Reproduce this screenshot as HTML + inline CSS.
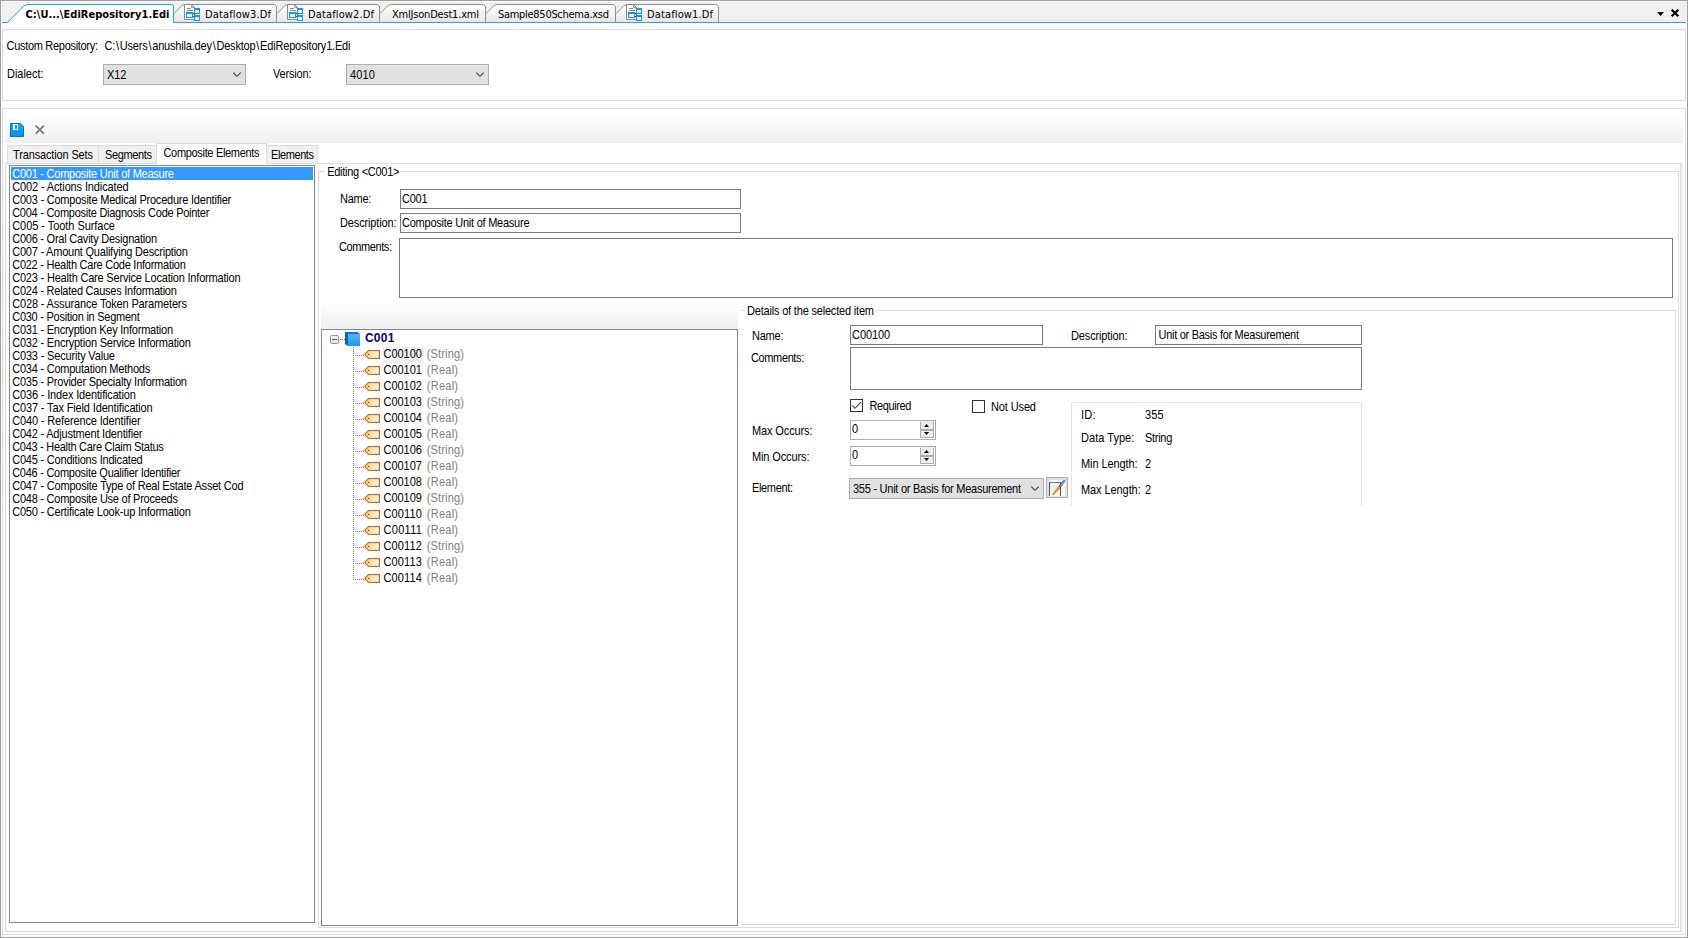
<!DOCTYPE html>
<html lang="en"><head><meta charset="utf-8"><title>EdiRepository1.Edi</title>
<style>
*{box-sizing:border-box;margin:0;padding:0}
html,body{width:1688px;height:938px;overflow:hidden;background:#fff}
body{position:relative;font-family:"Liberation Sans",sans-serif;font-size:11px;color:#000;letter-spacing:-0.27px}
.a{position:absolute}
.t{position:absolute;white-space:pre;line-height:13px;height:13px;transform:scaleY(1.125);transform-origin:0 10px}
.th{font-family:"DejaVu Sans Condensed","DejaVu Sans",sans-serif;font-size:11px;letter-spacing:0;transform:none}
.box{position:absolute;border:1px solid #dcdcdc}
.inp{position:absolute;border:1px solid #7a7a7a;background:#fff}
.cmb{position:absolute;border:1px solid #adadad;background:#e1e1e1}
.grad{position:absolute;background:linear-gradient(#fcfcfc,#f0f0f0)}
.li{position:absolute;left:1px;width:302px;height:13px;line-height:12px;white-space:pre;padding:1px 0 0 1.2px}
.li span{display:inline-block;transform:scaleY(1.125);transform-origin:0 10px}
.tr{position:absolute;white-space:pre;font-size:11px;line-height:16px;height:16px;transform:scaleY(1.125);transform-origin:0 12px}
.trb{position:absolute;white-space:pre;font-size:12px;line-height:16px;height:16px;font-weight:bold;color:#000080}
.tr i{font-style:normal;color:#808080;position:absolute;left:43.3px;top:0}
svg{position:absolute;overflow:visible}
</style></head>
<body>
<div class="a" style="left:0;top:0;width:1688px;height:938px;border:1px solid #a0a0a0"></div>
<div class="a" style="left:2px;top:2px;width:1685px;height:20px;background:#f0f0f0"></div>
<div class="a" style="left:1px;top:1px;width:1686px;height:1px;background:#fbfbfb"></div>
<div class="a" style="left:2px;top:22px;width:1684px;height:1px;background:#3399ff"></div>
<svg class="a" style="left:0;top:0" width="1688" height="30" viewBox="0 0 1688 30">
<defs><linearGradient id="tg" x1="0" y1="0" x2="0" y2="1"><stop offset="0" stop-color="#ffffff"/><stop offset="1" stop-color="#e6e6e6"/></linearGradient></defs>
<path d="M174 22V13.5L182 5.5L185 4.5H274.5L276.5 6.5V22Z" fill="url(#tg)"/>
<path d="M173.5 14L182 5.5L185 4.5H274.5L276.5 6.5V22" fill="none" stroke="#919191"/>
<g transform="translate(184,4)">
<path d="M0.5 0.5H7.5L10.5 3.5V15.5H0.5Z" fill="#fff" stroke="#8a8a8a"/>
<path d="M7.5 0.5V3.5H10.5" fill="none" stroke="#9a9a9a"/>
<path d="M3 4.5H7M3 6.5H9" stroke="#8c8c8c"/>
<g shape-rendering="crispEdges" fill="#3a3a3a"><rect x="9" y="9" width="1" height="1"/><rect x="9" y="12" width="1" height="1"/><rect x="10" y="10" width="1" height="1"/></g>
<g shape-rendering="crispEdges"><rect x="2" y="8" width="7" height="6" fill="#0c9bf4"/><rect x="3" y="10" width="5" height="3" fill="#fff"/>
<rect x="10" y="4" width="6" height="6" fill="#0c9bf4"/><rect x="11" y="6" width="4" height="3" fill="#fff"/>
<rect x="10" y="11" width="6" height="6" fill="#0c9bf4"/><rect x="11" y="13" width="4" height="3" fill="#fff"/></g>
</g>
<path d="M277 22V13.5L285 5.5L288 4.5H377.5L379.5 6.5V22Z" fill="url(#tg)"/>
<path d="M276.5 14L285 5.5L288 4.5H377.5L379.5 6.5V22" fill="none" stroke="#919191"/>
<g transform="translate(287,4)">
<path d="M0.5 0.5H7.5L10.5 3.5V15.5H0.5Z" fill="#fff" stroke="#8a8a8a"/>
<path d="M7.5 0.5V3.5H10.5" fill="none" stroke="#9a9a9a"/>
<path d="M3 4.5H7M3 6.5H9" stroke="#8c8c8c"/>
<g shape-rendering="crispEdges" fill="#3a3a3a"><rect x="9" y="9" width="1" height="1"/><rect x="9" y="12" width="1" height="1"/><rect x="10" y="10" width="1" height="1"/></g>
<g shape-rendering="crispEdges"><rect x="2" y="8" width="7" height="6" fill="#0c9bf4"/><rect x="3" y="10" width="5" height="3" fill="#fff"/>
<rect x="10" y="4" width="6" height="6" fill="#0c9bf4"/><rect x="11" y="6" width="4" height="3" fill="#fff"/>
<rect x="10" y="11" width="6" height="6" fill="#0c9bf4"/><rect x="11" y="13" width="4" height="3" fill="#fff"/></g>
</g>
<path d="M380 22V13.5L388 5.5L391 4.5H483.5L485.5 6.5V22Z" fill="url(#tg)"/>
<path d="M379.5 14L388 5.5L391 4.5H483.5L485.5 6.5V22" fill="none" stroke="#919191"/>
<path d="M486 22V13.5L494 5.5L497 4.5H613.5L615.5 6.5V22Z" fill="url(#tg)"/>
<path d="M485.5 14L494 5.5L497 4.5H613.5L615.5 6.5V22" fill="none" stroke="#919191"/>
<path d="M616 22V13.5L624 5.5L627 4.5H716.5L718.5 6.5V22Z" fill="url(#tg)"/>
<path d="M615.5 14L624 5.5L627 4.5H716.5L718.5 6.5V22" fill="none" stroke="#919191"/>
<g transform="translate(626,4)">
<path d="M0.5 0.5H7.5L10.5 3.5V15.5H0.5Z" fill="#fff" stroke="#8a8a8a"/>
<path d="M7.5 0.5V3.5H10.5" fill="none" stroke="#9a9a9a"/>
<path d="M3 4.5H7M3 6.5H9" stroke="#8c8c8c"/>
<g shape-rendering="crispEdges" fill="#3a3a3a"><rect x="9" y="9" width="1" height="1"/><rect x="9" y="12" width="1" height="1"/><rect x="10" y="10" width="1" height="1"/></g>
<g shape-rendering="crispEdges"><rect x="2" y="8" width="7" height="6" fill="#0c9bf4"/><rect x="3" y="10" width="5" height="3" fill="#fff"/>
<rect x="10" y="4" width="6" height="6" fill="#0c9bf4"/><rect x="11" y="6" width="4" height="3" fill="#fff"/>
<rect x="10" y="11" width="6" height="6" fill="#0c9bf4"/><rect x="11" y="13" width="4" height="3" fill="#fff"/></g>
</g>
<path d="M7.5 23L23.5 6.5L27 5H171L173 7V23Z" fill="#fff"/>
<path d="M2 22.5H7.5L23.3 6.3L27 4.5H171.5Q173.5 4.5 173.5 6.5V22.5H1686" fill="none" stroke="#3399ff"/>
<path d="M1657 12H1664L1660.5 16Z" fill="#000"/>
<path d="M1671.7 9.7L1678.3 16.3M1678.3 9.7L1671.7 16.3" stroke="#000" stroke-width="2.2" fill="none"/>
</svg>
<div class="t th" style="left:25.5px;top:8px;font-weight:bold;letter-spacing:0.03px;">C:\U...\EdiRepository1.Edi</div>
<div class="t th" style="left:205px;top:8px;letter-spacing:0.131px;">Dataflow3.Df</div>
<div class="t th" style="left:308px;top:8px;letter-spacing:0.131px;">Dataflow2.Df</div>
<div class="t th" style="left:392px;top:8px;letter-spacing:-0.2px;">XmlJsonDest1.xml</div>
<div class="t th" style="left:498px;top:8px;letter-spacing:-0.291px;">Sample850Schema.xsd</div>
<div class="t th" style="left:647px;top:8px;letter-spacing:0.131px;">Dataflow1.Df</div>
<div class="box" style="left:2px;top:29px;width:1684px;height:72px"></div>
<div class="t " style="left:6.5px;top:40px;letter-spacing:-0.3px;">Custom Repository:</div>
<div class="t " style="left:104.5px;top:40px;letter-spacing:-0.188px;">C:<span style="margin:0 0.9px">\</span>Users<span style="margin:0 0.9px">\</span>anushila.dey<span style="margin:0 0.9px">\</span>Desktop<span style="margin:0 0.9px">\</span>EdiRepository1.Edi</div>
<div class="t " style="left:7px;top:68px;letter-spacing:-0.027px;">Dialect:</div>
<div class="t " style="left:273px;top:68px;letter-spacing:-0.179px;">Version:</div>
<div class="cmb" style="left:103px;top:64px;width:143px;height:21px"><div class="t" style="left:3px;top:4px;letter-spacing:-0.139px;">X12</div><svg width="8" height="5" viewBox="0 0 8 5" style="right:4px;top:7px"><path d="M0.3 0.6L4 4.3L7.7 0.6" fill="none" stroke="#3a3a3a" stroke-width="1.05"/></svg></div>
<div class="cmb" style="left:346px;top:64px;width:143px;height:21px"><div class="t" style="left:3px;top:4px;letter-spacing:0.172px;">4010</div><svg width="8" height="5" viewBox="0 0 8 5" style="right:4px;top:7px"><path d="M0.3 0.6L4 4.3L7.7 0.6" fill="none" stroke="#3a3a3a" stroke-width="1.05"/></svg></div>
<div class="box" style="left:2px;top:108px;width:1684px;height:827px"></div>
<div class="grad" style="left:5px;top:118px;width:1678px;height:25px"></div>
<svg style="left:10px;top:123px" width="14" height="14" viewBox="0 0 14 14">
<defs><linearGradient id="sg" x1="0" y1="0" x2="0" y2="1"><stop offset="0" stop-color="#1aa6fb"/><stop offset="1" stop-color="#0894ec"/></linearGradient></defs>
<path d="M0.5 0.5H10.5L13.5 3.5V13.5H0.5Z" fill="url(#sg)" stroke="#0273c4"/>
<rect x="3" y="1" width="5" height="6" fill="#fff"/><rect x="5" y="2" width="2" height="4" fill="#0c9bf4"/></svg>
<svg style="left:35px;top:125px" width="10" height="10" viewBox="0 0 10 10"><path d="M0.7 0.7L8.8 8.8M8.8 0.7L0.7 8.8" stroke="#7c7c7c" stroke-width="1.8" fill="none"/></svg>
<div class="a" style="left:1681px;top:163px;width:2px;height:770px;background:#f0f0f0"></div>
<div class="box" style="left:5px;top:163px;width:1676px;height:769px"></div>
<div class="a" style="left:7px;top:145px;width:92px;height:18px;background:#f0f0f0;border:1px solid #dcdcdc;border-bottom:none"></div>
<div class="t " style="left:13px;top:149px;letter-spacing:-0.143px;">Transaction Sets</div>
<div class="a" style="left:98px;top:145px;width:59px;height:18px;background:#f0f0f0;border:1px solid #dcdcdc;border-bottom:none"></div>
<div class="t " style="left:105px;top:149px;letter-spacing:-0.362px;">Segments</div>
<div class="a" style="left:266px;top:145px;width:52px;height:18px;background:#f0f0f0;border:1px solid #dcdcdc;border-bottom:none"></div>
<div class="t " style="left:271px;top:149px;letter-spacing:-0.408px;">Elements</div>
<div class="a" style="left:156px;top:143px;width:111px;height:21px;background:#fff;border:1px solid #dcdcdc;border-bottom:none"></div>
<div class="t " style="left:163.5px;top:147px;letter-spacing:-0.324px;">Composite Elements</div>
<div class="a" style="left:9px;top:165px;width:306px;height:758px;border:1px solid #828790;background:#fff">
<div class="li" style="top:1px;background:#3399ff;color:#fff;letter-spacing:-0.244px"><span>C001 - Composite Unit of Measure</span></div>
<div class="li" style="top:14px;letter-spacing:-0.124px"><span>C002 - Actions Indicated</span></div>
<div class="li" style="top:27px;letter-spacing:-0.218px"><span>C003 - Composite Medical Procedure Identifier</span></div>
<div class="li" style="top:40px;letter-spacing:-0.265px"><span>C004 - Composite Diagnosis Code Pointer</span></div>
<div class="li" style="top:53px;letter-spacing:-0.05px"><span>C005 - Tooth Surface</span></div>
<div class="li" style="top:66px;letter-spacing:-0.235px"><span>C006 - Oral Cavity Designation</span></div>
<div class="li" style="top:79px;letter-spacing:-0.221px"><span>C007 - Amount Qualifying Description</span></div>
<div class="li" style="top:92px;letter-spacing:-0.251px"><span>C022 - Health Care Code Information</span></div>
<div class="li" style="top:105px;letter-spacing:-0.192px"><span>C023 - Health Care Service Location Information</span></div>
<div class="li" style="top:118px;letter-spacing:-0.242px"><span>C024 - Related Causes Information</span></div>
<div class="li" style="top:131px;letter-spacing:-0.152px"><span>C028 - Assurance Token Parameters</span></div>
<div class="li" style="top:144px;letter-spacing:-0.253px"><span>C030 - Position in Segment</span></div>
<div class="li" style="top:157px;letter-spacing:-0.229px"><span>C031 - Encryption Key Information</span></div>
<div class="li" style="top:170px;letter-spacing:-0.202px"><span>C032 - Encryption Service Information</span></div>
<div class="li" style="top:183px;letter-spacing:-0.169px"><span>C033 - Security Value</span></div>
<div class="li" style="top:196px;letter-spacing:-0.228px"><span>C034 - Computation Methods</span></div>
<div class="li" style="top:209px;letter-spacing:-0.225px"><span>C035 - Provider Specialty Information</span></div>
<div class="li" style="top:222px;letter-spacing:-0.158px"><span>C036 - Index Identification</span></div>
<div class="li" style="top:235px;letter-spacing:-0.141px"><span>C037 - Tax Field Identification</span></div>
<div class="li" style="top:248px;letter-spacing:-0.141px"><span>C040 - Reference Identifier</span></div>
<div class="li" style="top:261px;letter-spacing:-0.202px"><span>C042 - Adjustment Identifier</span></div>
<div class="li" style="top:274px;letter-spacing:-0.286px"><span>C043 - Health Care Claim Status</span></div>
<div class="li" style="top:287px;letter-spacing:-0.202px"><span>C045 - Conditions Indicated</span></div>
<div class="li" style="top:300px;letter-spacing:-0.267px"><span>C046 - Composite Qualifier Identifier</span></div>
<div class="li" style="top:313px;letter-spacing:-0.207px"><span>C047 - Composite Type of Real Estate Asset Cod</span></div>
<div class="li" style="top:326px;letter-spacing:-0.236px"><span>C048 - Composite Use of Proceeds</span></div>
<div class="li" style="top:339px;letter-spacing:-0.213px"><span>C050 - Certificate Look-up Information</span></div>
</div>
<div class="box" style="left:318px;top:171px;width:1361px;height:757px"></div>
<div class="a" style="left:325px;top:171px;width:76px;height:1px;background:#fff"></div>
<div class="t " style="left:327.2px;top:166px;letter-spacing:-0.273px;">Editing &lt;C001&gt;</div>
<div class="t " style="left:340px;top:193px;letter-spacing:-0.252px;">Name:</div>
<div class="t " style="left:340px;top:217px;letter-spacing:-0.143px;">Description:</div>
<div class="t " style="left:339.0px;top:241px;letter-spacing:-0.406px;">Comments:</div>
<div class="inp" style="left:400px;top:189px;width:341px;height:20px"><div class="t" style="left:1.0px;top:3px;letter-spacing:-0.266px;">C001</div></div>
<div class="inp" style="left:400px;top:213px;width:341px;height:20px"><div class="t" style="left:1.0px;top:3px;letter-spacing:-0.241px;">Composite Unit of Measure</div></div>
<div class="inp" style="left:399px;top:238px;width:1274px;height:60px"></div>
<div class="grad" style="left:321px;top:304px;width:417px;height:25px"></div>
<div class="a" style="left:321px;top:329px;width:417px;height:597px;border:1px solid #828790;background:#fff"></div>
<svg style="left:330px;top:335px" width="9" height="9" viewBox="0 0 9 9">
<defs><linearGradient id="eg" x1="0" y1="0" x2="1" y2="1"><stop offset="0" stop-color="#fff"/><stop offset="1" stop-color="#d8d8d8"/></linearGradient></defs>
<rect x="0.5" y="0.5" width="8" height="8" rx="1.2" fill="url(#eg)" stroke="#919191"/><path d="M2 4.5H7" stroke="#3f58a8" stroke-width="1"/></svg>
<svg style="left:0;top:0" width="1688" height="938" viewBox="0 0 1688 938" class="a"><g stroke="#7f7f7f" stroke-width="1" stroke-dasharray="1 1" fill="none" shape-rendering="crispEdges"><path d="M340 339.5H345"/><path d="M353.5 347V580"/><path d="M355 355.5H364"/><path d="M355 371.5H364"/><path d="M355 387.5H364"/><path d="M355 403.5H364"/><path d="M355 419.5H364"/><path d="M355 435.5H364"/><path d="M355 451.5H364"/><path d="M355 467.5H364"/><path d="M355 483.5H364"/><path d="M355 499.5H364"/><path d="M355 515.5H364"/><path d="M355 531.5H364"/><path d="M355 547.5H364"/><path d="M355 563.5H364"/><path d="M355 579.5H364"/></g></svg>
<svg style="left:345px;top:332px" width="15" height="14" viewBox="0 0 15 14">
<defs><linearGradient id="cg" x1="0" y1="0" x2="0" y2="1"><stop offset="0" stop-color="#52b5f8"/><stop offset="1" stop-color="#1b9bf0"/></linearGradient></defs>
<path d="M0 0H12L15 2V14H3L0 12Z" fill="#0b62a8"/>
<path d="M0 0H12L15 2H3Z" fill="#1279c8"/>
<rect x="3" y="2" width="12" height="12" fill="url(#cg)"/></svg>
<div class="trb" style="left:365px;top:330px;letter-spacing:0.204px">C001</div>
<svg width="0" height="0" style="left:0;top:0"><defs><linearGradient id="tgd" x1="0" y1="0" x2="1" y2="0"><stop offset="0" stop-color="#fbc468"/><stop offset="1" stop-color="#fff6e6"/></linearGradient></defs></svg>
<div class="a" style="left:383px;top:347px;width:41px;height:16px;background:#f0f0f0"></div>
<svg style="left:364px;top:350px" width="16" height="9" viewBox="0 0 16 9"><path d="M0.8 4.5L4.6 0.65H15.35V8.35H4.6Z" fill="#fff" stroke="#cf6a12" stroke-width="1.3" stroke-linejoin="miter"/><path d="M2.6 4.5L5 2H13.6V7H5Z" fill="url(#tgd)"/><rect x="4" y="4" width="1" height="1" fill="#5a3c10"/></svg>
<div class="tr" style="left:383.5px;top:346px;letter-spacing:-0.029px">C00100<i style="letter-spacing:0.134px">(String)</i></div>
<svg style="left:364px;top:366px" width="16" height="9" viewBox="0 0 16 9"><path d="M0.8 4.5L4.6 0.65H15.35V8.35H4.6Z" fill="#fff" stroke="#cf6a12" stroke-width="1.3" stroke-linejoin="miter"/><path d="M2.6 4.5L5 2H13.6V7H5Z" fill="url(#tgd)"/><rect x="4" y="4" width="1" height="1" fill="#5a3c10"/></svg>
<div class="tr" style="left:383.5px;top:362px;letter-spacing:-0.029px">C00101<i style="letter-spacing:0.249px">(Real)</i></div>
<svg style="left:364px;top:382px" width="16" height="9" viewBox="0 0 16 9"><path d="M0.8 4.5L4.6 0.65H15.35V8.35H4.6Z" fill="#fff" stroke="#cf6a12" stroke-width="1.3" stroke-linejoin="miter"/><path d="M2.6 4.5L5 2H13.6V7H5Z" fill="url(#tgd)"/><rect x="4" y="4" width="1" height="1" fill="#5a3c10"/></svg>
<div class="tr" style="left:383.5px;top:378px;letter-spacing:-0.029px">C00102<i style="letter-spacing:0.249px">(Real)</i></div>
<svg style="left:364px;top:398px" width="16" height="9" viewBox="0 0 16 9"><path d="M0.8 4.5L4.6 0.65H15.35V8.35H4.6Z" fill="#fff" stroke="#cf6a12" stroke-width="1.3" stroke-linejoin="miter"/><path d="M2.6 4.5L5 2H13.6V7H5Z" fill="url(#tgd)"/><rect x="4" y="4" width="1" height="1" fill="#5a3c10"/></svg>
<div class="tr" style="left:383.5px;top:394px;letter-spacing:-0.029px">C00103<i style="letter-spacing:0.134px">(String)</i></div>
<svg style="left:364px;top:414px" width="16" height="9" viewBox="0 0 16 9"><path d="M0.8 4.5L4.6 0.65H15.35V8.35H4.6Z" fill="#fff" stroke="#cf6a12" stroke-width="1.3" stroke-linejoin="miter"/><path d="M2.6 4.5L5 2H13.6V7H5Z" fill="url(#tgd)"/><rect x="4" y="4" width="1" height="1" fill="#5a3c10"/></svg>
<div class="tr" style="left:383.5px;top:410px;letter-spacing:-0.029px">C00104<i style="letter-spacing:0.249px">(Real)</i></div>
<svg style="left:364px;top:430px" width="16" height="9" viewBox="0 0 16 9"><path d="M0.8 4.5L4.6 0.65H15.35V8.35H4.6Z" fill="#fff" stroke="#cf6a12" stroke-width="1.3" stroke-linejoin="miter"/><path d="M2.6 4.5L5 2H13.6V7H5Z" fill="url(#tgd)"/><rect x="4" y="4" width="1" height="1" fill="#5a3c10"/></svg>
<div class="tr" style="left:383.5px;top:426px;letter-spacing:-0.029px">C00105<i style="letter-spacing:0.249px">(Real)</i></div>
<svg style="left:364px;top:446px" width="16" height="9" viewBox="0 0 16 9"><path d="M0.8 4.5L4.6 0.65H15.35V8.35H4.6Z" fill="#fff" stroke="#cf6a12" stroke-width="1.3" stroke-linejoin="miter"/><path d="M2.6 4.5L5 2H13.6V7H5Z" fill="url(#tgd)"/><rect x="4" y="4" width="1" height="1" fill="#5a3c10"/></svg>
<div class="tr" style="left:383.5px;top:442px;letter-spacing:-0.029px">C00106<i style="letter-spacing:0.134px">(String)</i></div>
<svg style="left:364px;top:462px" width="16" height="9" viewBox="0 0 16 9"><path d="M0.8 4.5L4.6 0.65H15.35V8.35H4.6Z" fill="#fff" stroke="#cf6a12" stroke-width="1.3" stroke-linejoin="miter"/><path d="M2.6 4.5L5 2H13.6V7H5Z" fill="url(#tgd)"/><rect x="4" y="4" width="1" height="1" fill="#5a3c10"/></svg>
<div class="tr" style="left:383.5px;top:458px;letter-spacing:-0.029px">C00107<i style="letter-spacing:0.249px">(Real)</i></div>
<svg style="left:364px;top:478px" width="16" height="9" viewBox="0 0 16 9"><path d="M0.8 4.5L4.6 0.65H15.35V8.35H4.6Z" fill="#fff" stroke="#cf6a12" stroke-width="1.3" stroke-linejoin="miter"/><path d="M2.6 4.5L5 2H13.6V7H5Z" fill="url(#tgd)"/><rect x="4" y="4" width="1" height="1" fill="#5a3c10"/></svg>
<div class="tr" style="left:383.5px;top:474px;letter-spacing:-0.029px">C00108<i style="letter-spacing:0.249px">(Real)</i></div>
<svg style="left:364px;top:494px" width="16" height="9" viewBox="0 0 16 9"><path d="M0.8 4.5L4.6 0.65H15.35V8.35H4.6Z" fill="#fff" stroke="#cf6a12" stroke-width="1.3" stroke-linejoin="miter"/><path d="M2.6 4.5L5 2H13.6V7H5Z" fill="url(#tgd)"/><rect x="4" y="4" width="1" height="1" fill="#5a3c10"/></svg>
<div class="tr" style="left:383.5px;top:490px;letter-spacing:-0.029px">C00109<i style="letter-spacing:0.134px">(String)</i></div>
<svg style="left:364px;top:510px" width="16" height="9" viewBox="0 0 16 9"><path d="M0.8 4.5L4.6 0.65H15.35V8.35H4.6Z" fill="#fff" stroke="#cf6a12" stroke-width="1.3" stroke-linejoin="miter"/><path d="M2.6 4.5L5 2H13.6V7H5Z" fill="url(#tgd)"/><rect x="4" y="4" width="1" height="1" fill="#5a3c10"/></svg>
<div class="tr" style="left:383.5px;top:506px;letter-spacing:0.136px">C00110<i style="letter-spacing:0.249px">(Real)</i></div>
<svg style="left:364px;top:526px" width="16" height="9" viewBox="0 0 16 9"><path d="M0.8 4.5L4.6 0.65H15.35V8.35H4.6Z" fill="#fff" stroke="#cf6a12" stroke-width="1.3" stroke-linejoin="miter"/><path d="M2.6 4.5L5 2H13.6V7H5Z" fill="url(#tgd)"/><rect x="4" y="4" width="1" height="1" fill="#5a3c10"/></svg>
<div class="tr" style="left:383.5px;top:522px;letter-spacing:0.299px">C00111<i style="letter-spacing:0.249px">(Real)</i></div>
<svg style="left:364px;top:542px" width="16" height="9" viewBox="0 0 16 9"><path d="M0.8 4.5L4.6 0.65H15.35V8.35H4.6Z" fill="#fff" stroke="#cf6a12" stroke-width="1.3" stroke-linejoin="miter"/><path d="M2.6 4.5L5 2H13.6V7H5Z" fill="url(#tgd)"/><rect x="4" y="4" width="1" height="1" fill="#5a3c10"/></svg>
<div class="tr" style="left:383.5px;top:538px;letter-spacing:0.136px">C00112<i style="letter-spacing:0.134px">(String)</i></div>
<svg style="left:364px;top:558px" width="16" height="9" viewBox="0 0 16 9"><path d="M0.8 4.5L4.6 0.65H15.35V8.35H4.6Z" fill="#fff" stroke="#cf6a12" stroke-width="1.3" stroke-linejoin="miter"/><path d="M2.6 4.5L5 2H13.6V7H5Z" fill="url(#tgd)"/><rect x="4" y="4" width="1" height="1" fill="#5a3c10"/></svg>
<div class="tr" style="left:383.5px;top:554px;letter-spacing:0.136px">C00113<i style="letter-spacing:0.249px">(Real)</i></div>
<svg style="left:364px;top:574px" width="16" height="9" viewBox="0 0 16 9"><path d="M0.8 4.5L4.6 0.65H15.35V8.35H4.6Z" fill="#fff" stroke="#cf6a12" stroke-width="1.3" stroke-linejoin="miter"/><path d="M2.6 4.5L5 2H13.6V7H5Z" fill="url(#tgd)"/><rect x="4" y="4" width="1" height="1" fill="#5a3c10"/></svg>
<div class="tr" style="left:383.5px;top:570px;letter-spacing:0.136px">C00114<i style="letter-spacing:0.249px">(Real)</i></div>
<div class="a" style="left:741px;top:310px;width:935px;height:615px;border:1px solid #dcdcdc;border-left:none"></div>
<div class="a" style="left:745px;top:310px;width:131px;height:1px;background:#fff"></div>
<div class="t " style="left:747px;top:305px;letter-spacing:-0.188px;">Details of the selected item</div>
<div class="t " style="left:752px;top:330px;letter-spacing:-0.227px;">Name:</div>
<div class="t " style="left:751.0px;top:352px;letter-spacing:-0.375px;">Comments:</div>
<div class="t " style="left:1071px;top:330px;letter-spacing:-0.143px;">Description:</div>
<div class="inp" style="left:850px;top:325px;width:193px;height:20px"><div class="t" style="left:1.0px;top:3px;letter-spacing:-0.059px;">C00100</div></div>
<div class="inp" style="left:1155px;top:325px;width:207px;height:20px"><div class="t" style="left:2.5px;top:3px;letter-spacing:-0.288px;">Unit or Basis for Measurement</div></div>
<div class="inp" style="left:850px;top:347px;width:512px;height:43px"></div>
<svg style="left:850px;top:399px" width="13" height="13" viewBox="0 0 13 13"><rect x="0.5" y="0.5" width="12" height="12" fill="#fff" stroke="#333"/><path d="M2.3 6.4L5 9.3L10.8 3.2" fill="none" stroke="#3a3a3a" stroke-width="1.1"/></svg>
<div class="t " style="left:869.5px;top:400px;letter-spacing:-0.406px;">Required</div>
<svg style="left:972px;top:400px" width="13" height="13" viewBox="0 0 13 13"><rect x="0.5" y="0.5" width="12" height="12" fill="#fff" stroke="#333"/></svg>
<div class="t " style="left:991px;top:401px;letter-spacing:-0.123px;">Not Used</div>
<div class="t " style="left:752px;top:425px;letter-spacing:-0.123px;">Max Occurs:</div>
<div class="t " style="left:752px;top:451px;letter-spacing:-0.119px;">Min Occurs:</div>
<div class="t " style="left:752px;top:482px;letter-spacing:-0.346px;">Element:</div>
<div class="a" style="left:850px;top:420px;width:86px;height:20px;border:1px solid #abadb3;background:#fff"><div class="t" style="left:1px;top:2px">0</div>
<svg style="left:69px;top:1px" width="14" height="16" viewBox="0 0 14 16" shape-rendering="crispEdges"><rect x="0" y="-1" width="14" height="17" fill="#ececec"/><path d="M0.5 0V16M13.5 0V16M0 15.5H14" stroke="#adadad" fill="none"/><rect x="0" y="7" width="14" height="2" fill="#acacac"/><path d="M4 5H9L6.5 2Z" fill="#000" shape-rendering="auto"/><path d="M4 10H9L6.5 13Z" fill="#000" shape-rendering="auto"/></svg></div>
<div class="a" style="left:850px;top:446px;width:86px;height:20px;border:1px solid #abadb3;background:#fff"><div class="t" style="left:1px;top:2px">0</div>
<svg style="left:69px;top:1px" width="14" height="16" viewBox="0 0 14 16" shape-rendering="crispEdges"><rect x="0" y="-1" width="14" height="17" fill="#ececec"/><path d="M0.5 0V16M13.5 0V16M0 15.5H14" stroke="#adadad" fill="none"/><rect x="0" y="7" width="14" height="2" fill="#acacac"/><path d="M4 5H9L6.5 2Z" fill="#000" shape-rendering="auto"/><path d="M4 10H9L6.5 13Z" fill="#000" shape-rendering="auto"/></svg></div>
<div class="cmb" style="left:849px;top:478px;width:195px;height:21px"><div class="t" style="left:3px;top:4px;letter-spacing:-0.256px;">355 - Unit or Basis for Measurement</div><svg width="8" height="5" viewBox="0 0 8 5" style="right:4px;top:7px"><path d="M0.3 0.6L4 4.3L7.7 0.6" fill="none" stroke="#3a3a3a" stroke-width="1.05"/></svg></div>
<div class="a" style="left:1046px;top:477px;width:22px;height:21px;border:1px solid #adadad;background:#e1e1e1">
<svg style="left:2px;top:2px" width="16" height="16" viewBox="0 0 16 16"><rect width="16" height="16" fill="#fff"/>
<path d="M0.55 16V2.55H11.45V16" fill="#fff" stroke="#44596d" stroke-width="1.1"/>
<path d="M1.1 2.55H10.9" stroke="#6f8295" stroke-width="1.1"/>
<rect x="2.5" y="4.5" width="7" height="10.5" fill="#edf1f5"/>
<path d="M2.9 14.5L4 15.6L11.4 8.3L9.1 6.3Z" fill="#f5851d"/>
<path d="M4.6 13.2L9.6 7.4" stroke="#ffc07a" stroke-width="0.6" fill="none"/>
<path d="M9.1 6.3L14.9 -0.3L16.4 1.1L11.4 8.3Z" fill="#3f5c99"/>
<path d="M10.8 6.6L15.3 1.2" stroke="#dfe6f3" stroke-width="0.7" fill="none"/>
</svg></div>
<div class="a" style="left:1071px;top:402px;width:291px;height:104px;border:1px solid #e3e3e3;border-bottom:none"></div>
<div class="t " style="left:1081px;top:409px;letter-spacing:0.219px;">ID:</div>
<div class="t " style="left:1145px;top:409px;letter-spacing:0.07px;">355</div>
<div class="t " style="left:1081px;top:432px;letter-spacing:0.033px;">Data Type:</div>
<div class="t " style="left:1145px;top:432px;letter-spacing:-0.29px;">String</div>
<div class="t " style="left:1081px;top:458px;letter-spacing:-0.088px;">Min Length:</div>
<div class="t " style="left:1145px;top:458px;">2</div>
<div class="t " style="left:1081px;top:484px;letter-spacing:-0.085px;">Max Length:</div>
<div class="t " style="left:1145px;top:484px;">2</div>
</body></html>
